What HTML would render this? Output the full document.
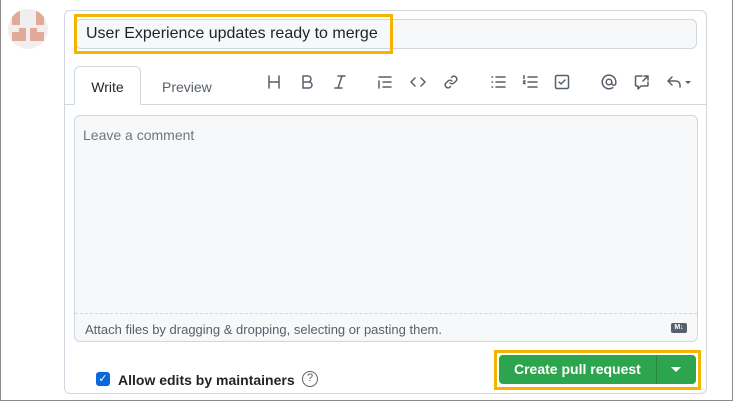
<!DOCTYPE html>
<html><head><style>
*{box-sizing:border-box;margin:0;padding:0}
body{width:733px;height:402px;background:#fff;font-family:"Liberation Sans",sans-serif;position:relative;overflow:hidden}
.frame{position:absolute;left:0;top:0;width:733px;height:401px;border:1px solid #8a8a8a;border-top:none}
.av{position:absolute;left:8px;top:9px;width:40px;height:40px;border-radius:50%;background:#f0eeee;overflow:hidden}
.av i{position:absolute;background:#e0a998}
.card{position:absolute;left:64px;top:10px;width:643px;height:384px;border:1px solid #d0d7de;border-radius:6px;background:#fff}
.title{position:absolute;left:75px;top:19px;width:622px;height:30px;border:1px solid #d0d7de;border-radius:6px;background:#f6f8fa}
.hl{position:absolute;border:3px solid #f5b400}
.ttext{position:absolute;left:86px;top:25px;font-size:16px;color:#1f2328}
.tabline{position:absolute;left:65px;top:104px;width:641px;border-top:1px solid #d0d7de}
.tab{position:absolute;left:74px;top:66px;width:67px;height:39px;border:1px solid #d0d7de;border-bottom:1px solid #fff;border-radius:6px 6px 0 0;background:#fff;font-size:14px;color:#1f2328;text-align:center;line-height:40px}
.prev{position:absolute;left:162px;top:79px;font-size:14px;color:#57606a}
svg.i{position:absolute;top:74px;width:16px;height:16px;fill:none;stroke:#57606a;stroke-width:1.5;stroke-linecap:round;stroke-linejoin:round}
.ta{position:absolute;left:74px;top:115px;width:624px;height:227px;border:1px solid #d0d7de;border-radius:6px;background:#f6f8fa}
.ph{position:absolute;left:83px;top:127px;font-size:14px;color:#6e7781}
.dash{position:absolute;left:75px;top:313px;width:622px;border-top:1px dashed #d0d7de}
.att{position:absolute;left:85px;top:322px;font-size:13px;color:#57606a}
.md{position:absolute;left:671px;top:323px;width:16px;height:10px;background:#57606a;border-radius:2px;color:#fff;font-size:7px;font-weight:bold;text-align:center;line-height:10px}
.btn{position:absolute;left:499px;top:355px;width:197px;height:29px;background:#2da44e;border-radius:4px;color:#fff;font-size:14px;font-weight:bold}
.chk{position:absolute;left:96px;top:372px;width:14px;height:14px;background:#0969da;border-radius:3px;color:#fff;font-size:11px;text-align:center;line-height:14px}
.al{position:absolute;left:118px;top:372px;font-size:14px;font-weight:bold;color:#1f2328}
.q{position:absolute;left:302px;top:371px;width:16px;height:16px;border:1.5px solid #57606a;border-radius:50%;font-size:11px;color:#57606a;text-align:center;line-height:13px}
</style></head><body>
<div class="frame"></div>
<div class="av"><i style="left:4px;top:1px;width:8px;height:15px"></i><i style="left:28px;top:1px;width:8px;height:15px"></i><i style="left:4px;top:23px;width:14px;height:9px"></i><i style="left:11px;top:19px;width:7px;height:13px"></i><i style="left:22px;top:23px;width:14px;height:9px"></i><i style="left:22px;top:19px;width:7px;height:13px"></i></div>
<div class="card"></div>
<div class="title"></div>
<div class="hl" style="left:74px;top:14px;width:319px;height:40px"></div>
<div class="ttext">User Experience updates ready to merge</div>
<div class="tabline"></div>
<div class="tab">Write</div>
<div class="prev">Preview</div>
<svg class="i" style="left:266px" viewBox="0 0 16 16"><path d="M3 2v12M13 2v12M3 8h10"/></svg>
<svg class="i" style="left:299px" viewBox="0 0 16 16" stroke-width="2.2"><path d="M4 2h5a3 3 0 0 1 0 6H4zM4 8h6a3 3 0 0 1 0 6H4z"/></svg>
<svg class="i" style="left:332px" viewBox="0 0 16 16"><path d="M6 2h7M3 14h7M10 2L6 14"/></svg>
<svg class="i" style="left:377px" viewBox="0 0 16 16"><path d="M2 3h12M6 8h8M6 13h8M2 7v7"/></svg>
<svg class="i" style="left:410px" viewBox="0 0 16 16"><path d="M5 4L1 8l4 4M11 4l4 4-4 4"/></svg>
<svg class="i" style="left:443px" viewBox="0 0 16 16"><path d="M7 9a3 3 0 0 0 4 0l2.5-2.5a3 3 0 0 0-4-4L8.5 3.5M9 7a3 3 0 0 0-4 0L2.5 9.5a3 3 0 0 0 4 4l1-1"/></svg>
<svg class="i" style="left:490px" viewBox="0 0 16 16"><path d="M6 3h9M6 8h9M6 13h9M2 3h.5M2 8h.5M2 13h.5"/></svg>
<svg class="i" style="left:522px" viewBox="0 0 16 16"><path d="M6 3h9M6 8h9M6 13h9M2 1.5v3M1.5 7h1.5l-1.5 2.5h1.5"/></svg>
<svg class="i" style="left:554px" viewBox="0 0 16 16"><rect x="1.5" y="1.5" width="13" height="13" rx="1.5"/><path d="M5 8l2 2 4-4"/></svg>
<svg class="i" style="left:601px" viewBox="0 0 16 16"><circle cx="8" cy="8" r="2.8"/><path d="M10.8 8v1.2a2 2 0 0 0 4 0V8a6.8 6.8 0 1 0-3 5.6"/></svg>
<svg class="i" style="left:634px" viewBox="0 0 16 16"><path d="M8 2H2.5a1 1 0 0 0-1 1v8a1 1 0 0 0 1 1H4v3l3-3h6a1 1 0 0 0 1-1V8M10 2h4v4M14 2L9 7"/></svg>
<svg class="i" style="left:666px;width:28px" viewBox="0 0 28 16"><path d="M6 3L2 7l4 4M2 7h8a4 4 0 0 1 4 4v2"/><path d="M19 7h6l-3 3z" fill="#57606a" stroke="none"/></svg>
<div class="ta"></div>
<div class="ph">Leave a comment</div>
<div class="dash"></div>
<div class="att">Attach files by dragging &amp; dropping, selecting or pasting them.</div>
<div class="md">M↓</div>
<div class="hl" style="left:494px;top:350px;width:207px;height:40px"></div>
<div class="btn"><span style="position:absolute;left:15px;top:6px">Create pull request</span><span style="position:absolute;left:157px;top:0;height:29px;border-left:1px solid #26893f"></span><svg style="position:absolute;left:172px;top:12px" width="10" height="6"><path d="M0 0h10L5 5z" fill="#fff"/></svg></div>
<div class="chk">✓</div>
<div class="al">Allow edits by maintainers</div>
<div class="q">?</div>
</body></html>
